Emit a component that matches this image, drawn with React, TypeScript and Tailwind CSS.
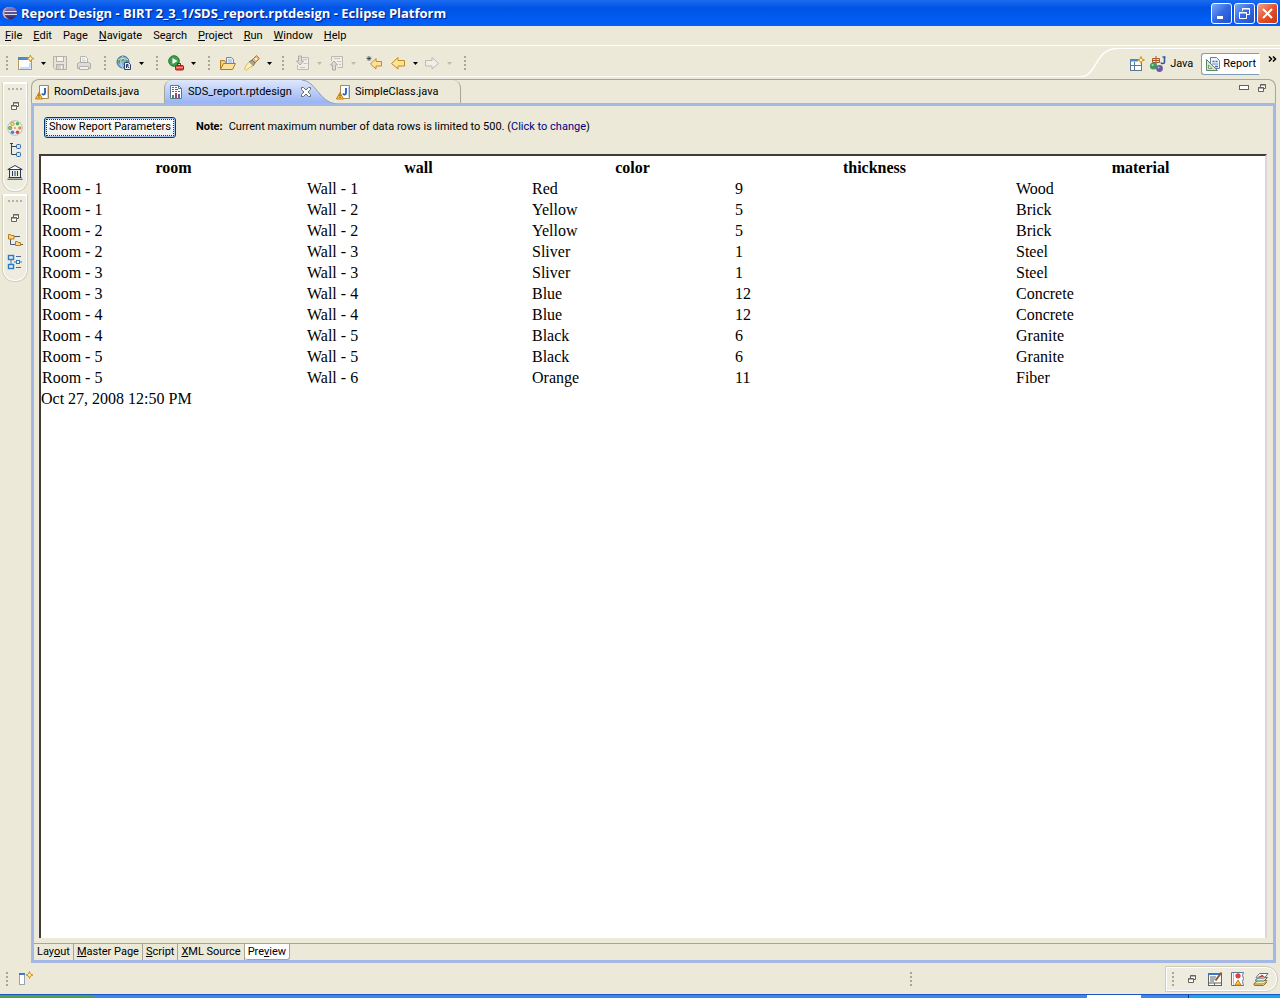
import type { ReactNode } from "react";
import clsx from "clsx";

const MENUS = [
  { label: "File", key: 0 },
  { label: "Edit", key: 0 },
  { label: "Page", key: 2 },
  { label: "Navigate", key: 0 },
  { label: "Search", key: 2 },
  { label: "Project", key: 0 },
  { label: "Run", key: 0 },
  { label: "Window", key: 0 },
  { label: "Help", key: 0 },
];

const PAGES = [
  { label: "Layout", key: 3 },
  { label: "Master Page", key: 0 },
  { label: "Script", key: 0 },
  { label: "XML Source", key: 0 },
  { label: "Preview", key: 3, active: true },
];

const COLUMNS = [
  { name: "room", width: "w-[265px]" },
  { name: "wall", width: "w-[225px]" },
  { name: "color", width: "w-[203px]" },
  { name: "thickness", width: "w-[281px]" },
  { name: "material", width: "w-[251px]" },
];

const ROWS = [
  ["Room - 1", "Wall - 1", "Red", "9", "Wood"],
  ["Room - 1", "Wall - 2", "Yellow", "5", "Brick"],
  ["Room - 2", "Wall - 2", "Yellow", "5", "Brick"],
  ["Room - 2", "Wall - 3", "Sliver", "1", "Steel"],
  ["Room - 3", "Wall - 3", "Sliver", "1", "Steel"],
  ["Room - 3", "Wall - 4", "Blue", "12", "Concrete"],
  ["Room - 4", "Wall - 4", "Blue", "12", "Concrete"],
  ["Room - 4", "Wall - 5", "Black", "6", "Granite"],
  ["Room - 5", "Wall - 5", "Black", "6", "Granite"],
  ["Room - 5", "Wall - 6", "Orange", "11", "Fiber"],
];

function Mnemonic({ label, at }: { label: string; at: number }) {
  return (
    <>
      {label.slice(0, at)}
      <span className="underline underline-offset-1">{label[at]}</span>
      {label.slice(at + 1)}
    </>
  );
}

function Icon({ children }: { children: ReactNode }) {
  return (
    <svg viewBox="0 0 16 16" className="h-4 w-4 shrink-0" fill="none" aria-hidden="true">
      {children}
    </svg>
  );
}

/* Icons */

const EclipseIcon = () => (
  <svg viewBox="0 0 16 16" className="h-4 w-4" aria-hidden="true">
    <defs>
      <linearGradient id="ecl" x1="0" y1="0" x2="0" y2="1">
        <stop offset="0" stopColor="#8f86c4" />
        <stop offset="1" stopColor="#2b1f63" />
      </linearGradient>
    </defs>
    <circle cx="6.5" cy="8" r="6" fill="#e6a28c" />
    <circle cx="8.7" cy="8" r="6.2" fill="url(#ecl)" />
    <path d="M2.6 6.5h12M2.4 9.5h12.6" stroke="#dcdcf2" strokeWidth="1.2" />
  </svg>
);

const Sparkle = ({ x, y }: { x: number; y: number }) => (
  <path
    transform={`translate(${x} ${y})`}
    d="M0 -3.5 1 -1 3.5 0 1 1 0 3.5 -1 1 -3.5 0 -1 -1Z"
    fill="#fdf3b0"
    stroke="#c98a1c"
    strokeWidth=".9"
  />
);

const NewIcon = () => (
  <Icon>
    <rect x=".5" y="2.5" width="13" height="12" fill="#fdfeff" stroke="#b59a5c" />
    <rect x="0" y="2" width="10" height="3" fill="#4c8ad0" />
    <path d="M2 13h10M12 8v5" stroke="#c6def6" strokeWidth="2" />
    <Sparkle x={12.4} y={3.6} />
  </Icon>
);

const SaveIcon = () => (
  <Icon>
    <path d="M1.5 1.5h13v13h-11l-2-2z" fill="#e6e4da" stroke="#b4b2a8" />
    <rect x="4.5" y="1.5" width="7" height="5" fill="#f6f5ef" stroke="#b4b2a8" />
    <rect x="4.5" y="9.5" width="7" height="5" fill="#d2d0c6" stroke="#b4b2a8" />
    <path d="M9.5 11v3" stroke="#fff" />
  </Icon>
);

const PrintIcon = () => (
  <Icon>
    <path d="M4.5 7.5v-6h5l2 2v4" fill="#f8f8f4" stroke="#b4b2ae" />
    <path d="M6 4h3M6 6h4" stroke="#c8c8c4" />
    <path d="M1.5 8.5l2-1h9l2 1v5h-13z" fill="#dedcd4" stroke="#aeaca6" />
    <path d="M3.5 11.5h9v3h-9z" fill="#f2f1ec" stroke="#b4b2ae" />
  </Icon>
);

const GlobeIcon = () => (
  <Icon>
    <circle cx="7" cy="7" r="6" fill="#7fb2e0" stroke="#3b6a9c" />
    <path d="M3 3c2-2 5-1 5 1S5 6 5 8 2 8 2 6zM9 3l3 2v3l-2-1z" fill="#5c9a5a" />
    <path d="M2 5c3-2 7-2 10 0M7 1c-3 3-3 9 0 12" stroke="#e8f2fb" strokeWidth=".8" />
    <path d="M8.5 7.5h4l2 2v5h-6z" fill="#e4ebf6" stroke="#30456c" />
    <path d="M10.5 13v-3.5H12V11h-1.5M12 11.500l1 1.500" stroke="#27365a" />
  </Icon>
);

const RunIcon = () => (
  <Icon>
    <circle cx="6" cy="6" r="5.3" fill="#3fa04a" stroke="#1f7a33" />
    <path d="M4.5 3v6l5-3z" fill="#fff" />
    <path d="M9.5 10V8.5h3V10" stroke="#8c1c1c" />
    <rect x="7.5" y="10.5" width="8" height="4.5" rx="1" fill="#d84a44" stroke="#9c1f1f" />
    <path d="M8 12.5h7" stroke="#f3b0a6" strokeWidth=".8" />
  </Icon>
);

const FolderIcon = () => (
  <Icon>
    <path d="M.5 13.5v-8h4l1 1.5h7v6.500z" fill="#f6cf7a" stroke="#b07a20" />
    <path d="M6.5 9V2.500h5l2 2V9" fill="#e8eef8" stroke="#7686a6" />
    <path d="M8 5h4M8 7h4" stroke="#9cb2d6" />
    <path d="M.5 14.500l3-6h12l-3 6z" fill="#fde09a" stroke="#b07a20" />
  </Icon>
);

const TorchIcon = () => (
  <Icon>
    <path d="M8 5l4.500-4.500 3 3L11 8z" fill="#f0b868" stroke="#b87828" />
    <path d="M5 7l3-2 3 3-2 3z" fill="#a8a49c" stroke="#77726a" />
    <path d="M5 7l4 4-3.500 1.500L2 15.500.5 14l2-4z" fill="#fff2b4" stroke="#d9b860" />
    <circle cx="12" cy="4" r="1" fill="#fff" />
  </Icon>
);

const NextNoteIcon = () => (
  <Icon>
    <path d="M5.500 2.500h9v12h-11V10" fill="#f0eee6" stroke="#bcbab0" />
    <path d="M4.500 1h3v5h2L6 10 2.500 6h2z" fill="#dedcd2" stroke="#aeaca2" />
    <path d="M9.500 8.500h4M6 12.500h5M9 4.500h4" stroke="#c6c4ba" />
  </Icon>
);

const PrevNoteIcon = () => (
  <Icon>
    <path d="M3.500 6V1.500h11v11h-5" fill="#f0eee6" stroke="#bcbab0" />
    <path d="M4.500 15h3v-5h2L6 6l-3.500 4h2z" fill="#dedcd2" stroke="#aeaca2" />
    <path d="M6 3.500h6M9 6.500h4M11 9.500h2" stroke="#c6c4ba" />
  </Icon>
);

const LastEditIcon = () => (
  <Icon>
    <path d="M15.500 6.500H10V3.500L4.500 9l5.500 5v-3h5.500z" fill="#fde29a" stroke="#c98a1c" />
    <path
      d="M3 1v5M.5 3.500h5M1.200 1.700l3.600 3.600M4.800 1.700L1.200 5.300"
      stroke="#3a3f55"
      strokeWidth=".8"
    />
  </Icon>
);

const BackIcon = () => (
  <Icon>
    <path d="M14.500 5.500H8V2.500L1.500 8.500 8 14v-3h6.500z" fill="#fde29a" stroke="#c98a1c" />
  </Icon>
);

const ForwardIcon = () => (
  <Icon>
    <path d="M1.500 5.500H8V2.500l6.500 6L8 14v-3H1.500z" fill="#f0eee8" stroke="#bdbbb2" />
  </Icon>
);

const OpenPerspectiveIcon = () => (
  <Icon>
    <rect x="1.5" y="3.5" width="11" height="11" fill="#fff" stroke="#5a7896" />
    <path d="M1 4.500h8" stroke="#4c8ad0" strokeWidth="2" />
    <path d="M5.500 6v8M2 9.500h11" stroke="#5a7896" />
    <Sparkle x={12} y={4} />
  </Icon>
);

const JavaPerspectiveIcon = () => (
  <svg viewBox="0 0 18 18" className="h-[18px] w-[18px] shrink-0" fill="none" aria-hidden="true">
    <path d="M3.500 3.500h7v4h-7zM7 1v8M3.500 5.500h7" fill="#f4dcb4" stroke="#a85a2c" />
    <path d="M15.500 2v5c0 2-3 2-3.500.5M13.500 2h3" stroke="#34569c" strokeWidth="1.6" />
    <circle cx="4.5" cy="11" r="3.6" fill="#3f9a5c" />
    <circle cx="10.5" cy="13.5" r="3.4" fill="#6a5aa8" />
    <circle cx="3.6" cy="10" r="1.1" fill="#a8dcb4" />
    <circle cx="9.6" cy="12.5" r="1" fill="#bcb4e0" />
  </svg>
);

const ReportPerspectiveIcon = () => (
  <Icon>
    <path d="M5.500 1.500h6l3 3v8h-9z" fill="#eef4fc" stroke="#6a7f9c" />
    <path d="M7.500 5.500h2M10.500 5.500h2M7.500 8h1M9.500 8h1M11.500 8h1M10 10.500h3" stroke="#3c6cc0" strokeWidth="1.5" />
    <path d="M1.500 3.500v11h11z" fill="#d6e6d0" stroke="#5e8660" />
    <path d="M3.500 9v3.500H7z" fill="#fff" stroke="#5e8660" strokeWidth=".8" />
  </Icon>
);

const JavaFileIcon = () => (
  <Icon>
    <path d="M4.500 1.500h9v13h-9z" fill="#fff" stroke="#a88a4c" />
    <path d="M12.500 2.500v11" stroke="#bcd2f0" />
    <path d="M10 4v5c0 2-2.500 2-3 .5" stroke="#2c5ab0" strokeWidth="1.8" />
    <path d="M4 8.500L7.500 15h-7z" fill="#fcc84c" stroke="#c47a14" />
    <path d="M4 10.500v2M4 13.200v.8" stroke="#6a3a00" />
  </Icon>
);

const ReportFileIcon = () => (
  <Icon>
    <path d="M2.500 1.500h8l3 3v10h-11z" fill="#fff" stroke="#5a7896" />
    <path d="M10.500 1.500v3h3" stroke="#5a7896" />
    <path d="M4 3.500h2M7 3.500h2M4 5.500h2M7 5.500h3M4 7.500h2M7 7.500h2M10 7.500h2" stroke="#3c6cc0" />
    <path d="M5 14v-3" stroke="#2a9c4c" strokeWidth="2" />
    <path d="M8 14V9" stroke="#cc3a3a" strokeWidth="2" />
    <path d="M11 14v-4" stroke="#3c6cc0" strokeWidth="2" />
  </Icon>
);

const CloseTabIcon = () => (
  <svg viewBox="0 0 12 12" className="h-3 w-3" aria-hidden="true">
    <path
      d="M1.500 1.500h2L6 4l2.500-2.500h2v2L8 6l2.500 2.500v2h-2L6 8l-2.500 2.500h-2v-2L4 6 1.500 3.500z"
      fill="#fff"
      stroke="#6c6c6c"
    />
  </svg>
);

const RestoreIcon = () => (
  <svg viewBox="0 0 10 10" className="h-2.5 w-2.5" fill="#fff" aria-hidden="true">
    <path d="M3.500 1.500h5v4h-5z" stroke="#66625a" />
    <path d="M3 2h6" stroke="#66625a" />
    <path d="M1.500 4.500h5v4h-5z" stroke="#66625a" />
    <path d="M1 5h6" stroke="#66625a" />
  </svg>
);

const PaletteIcon = () => (
  <Icon>
    <circle cx="8" cy="8" r="7.3" fill="#f4f1e4" stroke="#b4bccc" />
    <circle cx="5.5" cy="3.8" r="1.8" fill="#f4e04c" stroke="#a88a1c" strokeWidth=".7" />
    <circle cx="10.5" cy="3.8" r="1.8" fill="#4caf50" />
    <circle cx="3.2" cy="8" r="1.7" fill="#8cc850" stroke="#5a8c3c" strokeWidth=".7" />
    <circle cx="12.8" cy="8" r="1.7" fill="#e88c3c" />
    <circle cx="5.5" cy="12.2" r="1.8" fill="#4c7cd8" />
    <circle cx="10.5" cy="12.2" r="1.8" fill="#cc4848" />
    <circle cx="8" cy="8" r="1.2" fill="#e8a0b8" />
  </Icon>
);

const OutlineIcon = () => (
  <Icon>
    <path d="M4.500 1v11.500h5M4.500 4.500h5M3 1.500h3" stroke="#2c4468" />
    <rect x="9.5" y="2.5" width="4" height="4" rx="1" fill="#d4e8fc" stroke="#2c62a8" />
    <rect x="9.5" y="10.5" width="4" height="4" rx="1" fill="#d4e8fc" stroke="#2c62a8" />
  </Icon>
);

const LibraryIcon = () => (
  <Icon>
    <path d="M.8 5.500L8 1.500l7.200 4z" fill="#fff" stroke="#223c5c" />
    <path d="M2.500 6v7M5.500 7v5M8 7v5M10.500 7v5M13.500 6v7" stroke="#223c5c" />
    <path d="M1.500 13.500h13M.5 15.200h15" stroke="#223c5c" />
  </Icon>
);

const NavigatorIcon = () => (
  <Icon>
    <path d="M3.500 6v6.500h5M6 4.500h3" stroke="#4a5a74" />
    <path d="M1.500 2.500h2l.5 1h3V7H1.500z" fill="#fcd884" stroke="#b87c20" />
    <path d="M8.500 9.500h2l.5 1h2.500v3h-5z" fill="#fcd884" stroke="#b87c20" />
    <path d="M9 4.500h4M14 12.500h2" stroke="#4a5a74" />
  </Icon>
);

const DataIcon = () => (
  <Icon>
    <rect x="1.5" y="1.5" width="5" height="4" fill="#dcecfc" stroke="#2c7ac0" strokeWidth="1.4" />
    <rect x="1.5" y="10.5" width="5" height="4" fill="#dcecfc" stroke="#2c7ac0" strokeWidth="1.4" />
    <path d="M4 6v4M7 8h2" stroke="#2c7ac0" />
    <rect x="9.5" y="6.5" width="3" height="3" fill="#fff" stroke="#2c7ac0" />
    <path d="M9 2.500h5M9 13.500h5M13 8h2" stroke="#4a6a94" />
  </Icon>
);

const FastViewIcon = () => (
  <Icon>
    <rect x="1.5" y="2.5" width="5" height="11" fill="#fff" stroke="#9aa4ac" />
    <path d="M1 3h6" stroke="#3c78c8" strokeWidth="2" />
    <Sparkle x={11.5} y={4} />
  </Icon>
);

const PropertiesIcon = () => (
  <Icon>
    <rect x="1.5" y="2.5" width="13" height="12" fill="#fbfbf4" stroke="#5c6470" />
    <path d="M1 3h13" stroke="#3c78c8" strokeWidth="2" />
    <path d="M3 6h6M3 8h5M3 10h4M1.500 12h13M7.500 12v2.500" stroke="#5c6470" />
    <path d="M14.500 1.500l-6 8" stroke="#8a5a2c" strokeWidth="2" />
  </Icon>
);

const ProblemsIcon = () => (
  <Icon>
    <path d="M1.500 1.500h12l-1 3 1 3-1 3 1 4h-12z" fill="#fff" stroke="#5a7896" />
    <path d="M3.500 2v12" stroke="#a8c0dc" />
    <circle cx="8" cy="4.8" r="2.6" fill="#d84444" />
    <path d="M8 9l3 5H5z" fill="#fcc84c" stroke="#c47a14" />
  </Icon>
);

const LayersIcon = () => (
  <Icon>
    <path d="M1 12.500l4-3h9L10.500 13H2l-1-.5V14l1 .5h8.500L14 11" fill="#fce8a8" stroke="#94742c" />
    <path d="M2 9.500l3.500-3h9L11 10H3z" fill="#d8ecd0" stroke="#4c7a5c" />
    <path d="M3 6.500l3.500-4H15L11.500 7H4z" fill="#fff" stroke="#5a6c84" />
    <path d="M6 6l3-2.500L12 6z" fill="#cc4848" />
    <path d="M4.500 6.500l2-1.500L8 6.500z" fill="#2c6c9c" />
  </Icon>
);

/* Small parts */

function Grip() {
  return (
    <span className="flex h-4 w-3.5 shrink-0 flex-col items-center justify-between py-px">
      <i className="h-0.5 w-0.5 bg-[#a9a695]" />
      <i className="h-0.5 w-0.5 bg-[#a9a695]" />
      <i className="h-0.5 w-0.5 bg-[#a9a695]" />
      <i className="h-0.5 w-0.5 bg-[#a9a695]" />
    </span>
  );
}

function ToolButton({
  label,
  icon,
  menu,
  disabled,
}: {
  label: string;
  icon: ReactNode;
  menu?: boolean;
  disabled?: boolean;
}) {
  return (
    <span className="flex items-center">
      <button aria-label={label} disabled={disabled} className="flex h-6 w-6 items-center justify-center">
        {icon}
      </button>
      {menu ? (
        <button
          aria-label={`${label} menu`}
          disabled={disabled}
          className={clsx(
            "flex h-6 w-2.5 items-center justify-center",
            disabled ? "text-[#bdbbb0]" : "text-black"
          )}
        >
          <svg viewBox="0 0 5 3" className="h-[3px] w-[5px]" aria-hidden="true">
            <path d="M0 0h5L2.500 3z" fill="currentColor" />
          </svg>
        </button>
      ) : null}
    </span>
  );
}

function WindowButton({ label, close, children }: { label: string; close?: boolean; children: ReactNode }) {
  return (
    <button
      aria-label={label}
      className={clsx(
        "flex h-[21px] w-[21px] items-center justify-center rounded-[3px] border border-white",
        close
          ? "bg-linear-to-br from-[#f0a088] via-[#e2532c] to-[#c83410]"
          : "bg-linear-to-br from-[#7ea6f4] via-[#3468e4] to-[#2150cc]"
      )}
    >
      <svg viewBox="0 0 15 15" className="h-[15px] w-[15px]" fill="none" stroke="#fff" aria-hidden="true">
        {children}
      </svg>
    </button>
  );
}

function StripGroup({ items }: { items: { label: string; icon: ReactNode }[] }) {
  return (
    <div className="flex w-[26px] flex-col items-center rounded-b-xl border border-[#d2cfbc] border-t-white bg-[#eeecdf] pb-2 shadow-[inset_0_0_0_1px_#fff]">
      <span className="mt-[5px] flex gap-0.5">
        <i className="h-0.5 w-0.5 bg-[#b4b1a2]" />
        <i className="h-0.5 w-0.5 bg-[#b4b1a2]" />
        <i className="h-0.5 w-0.5 bg-[#b4b1a2]" />
        <i className="h-0.5 w-0.5 bg-[#b4b1a2]" />
      </span>
      <button aria-label="Restore" className="mt-[5px] flex h-[22px] w-6 items-center justify-center">
        <RestoreIcon />
      </button>
      {items.map((item) => (
        <button key={item.label} aria-label={item.label} className="flex h-[22px] w-6 items-center justify-center">
          {item.icon}
        </button>
      ))}
    </div>
  );
}

function TitleBar() {
  return (
    <header className="flex h-[26px] items-center bg-linear-to-b from-[#1c6cf0] via-[#0053e4] via-30% to-[#0262fb] px-0.5">
      <EclipseIcon />
      <h1 className="ml-[3px] flex-1 font-['Open_Sans',sans-serif] text-[13px] leading-5 font-bold text-white [text-shadow:1px_1px_1px_#0a1883]">
        Report Design - BIRT 2_3_1/SDS_report.rptdesign - Eclipse Platform
      </h1>
      <div className="flex gap-0.5">
        <WindowButton label="Minimize">
          <path d="M3 11.500h6" strokeWidth="3" />
        </WindowButton>
        <WindowButton label="Restore">
          <path d="M5.500 5V2.500h7v6H10M5 3h8" />
          <path d="M2.500 6.500h7v6h-7zM2 7h8" />
        </WindowButton>
        <WindowButton label="Close" close>
          <path d="M3 3l9 9M12 3l-9 9" strokeWidth="2" />
        </WindowButton>
      </div>
    </header>
  );
}

function Toolbar() {
  return (
    <div className="flex h-[33px] items-stretch border-t border-white">
      <div className="mb-px flex flex-1 items-center border-b border-white pt-1">
        <Grip />
        <div className="flex pr-0.5">
          <ToolButton label="New" icon={<NewIcon />} menu />
          <ToolButton label="Save" icon={<SaveIcon />} disabled />
          <ToolButton label="Print" icon={<PrintIcon />} disabled />
        </div>
        <Grip />
        <div className="flex pr-1">
          <ToolButton label="View report" icon={<GlobeIcon />} menu />
        </div>
        <Grip />
        <div className="flex pr-1">
          <ToolButton label="External tools" icon={<RunIcon />} menu />
        </div>
        <Grip />
        <div className="flex pr-0.5">
          <ToolButton label="Open type" icon={<FolderIcon />} />
          <ToolButton label="Search" icon={<TorchIcon />} menu />
        </div>
        <Grip />
        <div className="flex">
          <ToolButton label="Next annotation" icon={<NextNoteIcon />} menu disabled />
          <ToolButton label="Previous annotation" icon={<PrevNoteIcon />} menu disabled />
        </div>
        <div className="flex px-1">
          <ToolButton label="Last edit location" icon={<LastEditIcon />} />
          <ToolButton label="Back" icon={<BackIcon />} menu />
          <ToolButton label="Forward" icon={<ForwardIcon />} menu disabled />
        </div>
        <Grip />
      </div>

      {/* Perspective switcher behind its curved edge */}
      <svg viewBox="0 0 36 32" className="h-8 w-9 shrink-0" fill="none" aria-hidden="true">
        <path d="M0 30.500C16 30.500 14 2.500 36 2.500" stroke="#fff" strokeWidth="1.500" />
      </svg>
      <div className="mt-0.5 flex items-center border-t border-white pl-2">
        <button aria-label="Open perspective" className="flex h-6 w-6 items-center justify-center">
          <OpenPerspectiveIcon />
        </button>
        <button className="flex h-6 items-center gap-[3px]">
          <JavaPerspectiveIcon />
          Java
        </button>
        <button className="ml-2 flex h-[22px] items-center gap-0.5 rounded-l-[3px] border border-[#7f9db9] border-r-white bg-white px-[3px]">
          <ReportPerspectiveIcon />
          Report
        </button>
        <button aria-label="More perspectives" className="flex h-6 w-5 items-start justify-center pt-1 pl-1">
          <svg viewBox="0 0 9 6" className="h-1.5 w-[9px]" fill="none" stroke="#000" strokeWidth="1.5" aria-hidden="true">
            <path d="M1 .5L3.500 3 1 5.500M5 .5L7.500 3 5 5.500" />
          </svg>
        </button>
      </div>
    </div>
  );
}

function EditorTabs() {
  return (
    <div role="tablist" className="flex h-6 items-stretch rounded-t-lg border border-b-0 border-[#a7a593]">
      <button role="tab" aria-selected="false" className="flex w-[132px] items-center gap-[3px] pt-px pl-[3px]">
        <JavaFileIcon />
        RoomDetails.java
      </button>
      <div className="relative flex w-[172px] items-center rounded-tl-lg border-l border-[#a7a593] bg-linear-to-b from-[#dfe8fb] to-[#99b4f4] pt-px">
        <button role="tab" aria-selected="true" className="flex items-center gap-1 pl-[3px]">
          <ReportFileIcon />
          SDS_report.rptdesign
        </button>
        <button aria-label="Close" className="ml-2">
          <CloseTabIcon />
        </button>
        <svg viewBox="0 0 36 24" className="absolute top-0 right-0 h-6 w-9" fill="none" aria-hidden="true">
          <path d="M2 0C16 1 19 22 36 24V0z" fill="#ece9d8" />
          <path d="M2 0C16 1 19 22 36 24" stroke="#8e9cbc" />
        </svg>
      </div>
      <button
        role="tab"
        aria-selected="false"
        className="flex w-[125px] items-center gap-[3px] rounded-tr-lg border-r border-[#a7a593] pt-px"
      >
        <JavaFileIcon />
        SimpleClass.java
      </button>
      <div className="flex flex-1 items-start justify-end gap-2 pt-[3px] pr-2">
        <button aria-label="Minimize view" className="mt-0.5 h-[5px] w-2.5 border border-[#66625a] bg-white" />
        <button aria-label="Restore view">
          <RestoreIcon />
        </button>
      </div>
    </div>
  );
}

function ReportView() {
  return (
    <div className="flex-1 border-t-2 border-r-2 border-l-2 border-t-[#403c38] border-r-[#dcd6dc] border-l-[#403c38] bg-white pt-px font-['Liberation_Serif',serif] text-[16px] leading-[19px]">
      <table className="mb-px w-full table-fixed border-collapse">
        <thead>
          <tr>
            {COLUMNS.map((col) => (
              <th key={col.name} className={clsx("p-px text-center font-bold", col.width)}>
                {col.name}
              </th>
            ))}
          </tr>
        </thead>
        <tbody>
          {ROWS.map((row, i) => (
            <tr key={i}>
              {row.map((cell, j) => (
                <td key={j} className="p-px">
                  {cell}
                </td>
              ))}
            </tr>
          ))}
        </tbody>
      </table>
      <p>Oct 27, 2008 12:50 PM</p>
    </div>
  );
}

export default function App() {
  return (
    <div className="flex min-h-screen flex-col bg-[#ece9d8] font-['Roboto',sans-serif] text-[11px] leading-[14px] text-black">
      <TitleBar />

      <nav className="flex h-[19px] items-center gap-[11px] pl-[5px]">
        {MENUS.map((menu) => (
          <button key={menu.label}>
            <Mnemonic label={menu.label} at={menu.key} />
          </button>
        ))}
      </nav>

      <Toolbar />

      <div className="flex flex-1 pt-px">
        <aside className="flex w-[31px] shrink-0 flex-col gap-0.5 pt-[3px] pl-0.5">
          <StripGroup
            items={[
              { label: "Palette", icon: <PaletteIcon /> },
              { label: "Outline", icon: <OutlineIcon /> },
              { label: "Library Explorer", icon: <LibraryIcon /> },
            ]}
          />
          <StripGroup
            items={[
              { label: "Navigator", icon: <NavigatorIcon /> },
              { label: "Data Explorer", icon: <DataIcon /> },
            ]}
          />
        </aside>

        <main className="mr-1 flex min-w-0 flex-1 flex-col">
          <EditorTabs />
          <div className="flex flex-1 flex-col border-3 border-[#a3b8e4]">
            <div className="flex h-12 items-center gap-5 pb-1.5 pl-[10px]">
              <button className="h-[21px] rounded-[3px] border border-[#003c74] bg-linear-to-b from-white to-[#eeede6] p-px shadow-[inset_0_0_0_1px_#a9c3f0]">
                <span className="flex h-full items-center border border-dotted border-[#333] px-0.5">
                  Show Report Parameters
                </span>
              </button>
              <p>
                <b className="mr-1.5">Note:</b>
                Current maximum number of data rows is limited to 500. (
                <a href="#change" className="text-[#000080]">
                  Click to change
                </a>
                )
              </p>
            </div>
            <div className="flex flex-1 flex-col pr-1.5 pb-[5px] pl-[5px]">
              <ReportView />
            </div>
            <div role="tablist" className="flex h-[17px] items-stretch border-t border-[#a7a593]">
              {PAGES.map((page) => (
                <button
                  key={page.label}
                  role="tab"
                  aria-selected={!!page.active}
                  className={clsx(
                    "border-r border-[#a7a593] px-[3px]",
                    page.active && "rounded-b-[3px] border-b bg-white"
                  )}
                >
                  <Mnemonic label={page.label} at={page.key} />
                </button>
              ))}
            </div>
          </div>
        </main>
      </div>

      <footer className="flex h-[31px] items-center">
        <Grip />
        <button aria-label="Show view as fast view" className="ml-1">
          <FastViewIcon />
        </button>
        <div className="flex flex-1 justify-end pr-[247px]">
          <Grip />
        </div>
        <div className="mr-0.5 flex h-[26px] items-center rounded-r-xl border border-[#cfccba] bg-[#eeecdf] pr-[5px] shadow-[inset_0_0_0_1px_#fff]">
          <Grip />
          <button aria-label="Restore" className="flex w-[23px] items-center justify-center">
            <RestoreIcon />
          </button>
          <button aria-label="Properties" className="flex w-[23px] items-center justify-center">
            <PropertiesIcon />
          </button>
          <button aria-label="Problems" className="flex w-[23px] items-center justify-center">
            <ProblemsIcon />
          </button>
          <button aria-label="Layers" className="flex w-[23px] items-center justify-center">
            <LayersIcon />
          </button>
        </div>
      </footer>

      {/* Top edge of the taskbar */}
      <div className="flex h-1 border-t border-[#1d56c0] bg-[#3f86ea]">
        <div className="w-[94px] bg-[#4ca24c]" />
        <div className="flex-1" />
        <div className="w-[54px] bg-white" />
        <div className="w-[47px]" />
        <div className="w-[92px] border-l border-[#0a2c84] bg-[#18a4ee]" />
      </div>
    </div>
  );
}
